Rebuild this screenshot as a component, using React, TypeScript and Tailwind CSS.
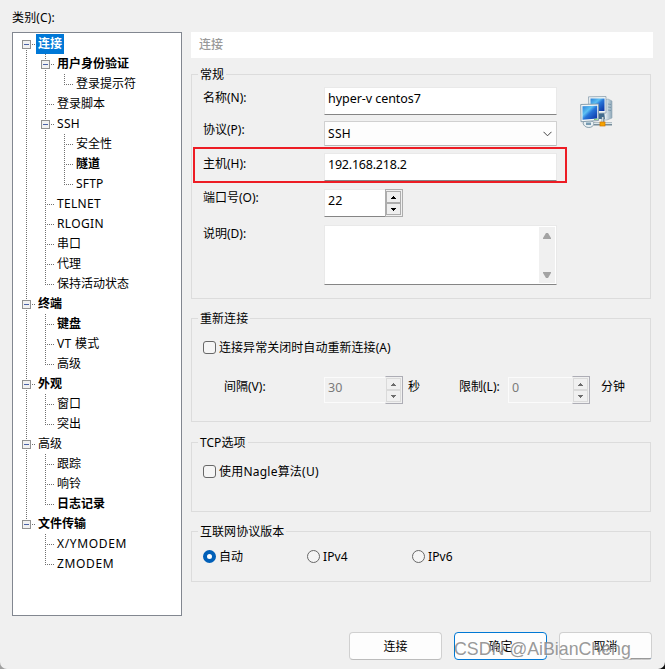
import type { ReactNode } from "react";

type Row = { text: string; cells: string; bold?: boolean; selected?: boolean; spacing?: string };

/* cells: F/B/E = expander (first, middle, end), T/L = branch (middle, last), I = pass-through line, - = blank */
const rows: Row[] = [
  { text: "连接", cells: "F", selected: true, bold: true },
  { text: "用户身份验证", cells: "IB", bold: true },
  { text: "登录提示符", cells: "IIL" },
  { text: "登录脚本", cells: "IT" },
  { text: "SSH", cells: "IB", spacing: "tracking-[0.3px]" },
  { text: "安全性", cells: "IIT" },
  { text: "隧道", cells: "IIT", bold: true },
  { text: "SFTP", cells: "IIL", spacing: "tracking-[0.2px]" },
  { text: "TELNET", cells: "IT", spacing: "tracking-[0.3px]" },
  { text: "RLOGIN", cells: "IT", spacing: "tracking-[0.35px]" },
  { text: "串口", cells: "IT" },
  { text: "代理", cells: "IT" },
  { text: "保持活动状态", cells: "IL" },
  { text: "终端", cells: "B", bold: true },
  { text: "键盘", cells: "IT", bold: true },
  { text: "VT 模式", cells: "IT", spacing: "tracking-[0.3px]" },
  { text: "高级", cells: "IL" },
  { text: "外观", cells: "B", bold: true },
  { text: "窗口", cells: "IT" },
  { text: "突出", cells: "IL" },
  { text: "高级", cells: "B" },
  { text: "跟踪", cells: "IT" },
  { text: "响铃", cells: "IT" },
  { text: "日志记录", cells: "IL", bold: true },
  { text: "文件传输", cells: "E", bold: true },
  { text: "X/YMODEM", cells: "-T", spacing: "tracking-[0.65px]" },
  { text: "ZMODEM", cells: "-L", spacing: "tracking-[0.65px]" },
];

function Cell({ kind }: { kind: string }) {
  const box = "FBE".includes(kind);
  const top = "IBETL".includes(kind);
  const bottom = "IFBT".includes(kind);
  const side = "FBETL".includes(kind);
  return (
    <svg width="19" height="20" className="shrink-0" fill="none" shapeRendering="crispEdges">
      {top && <path d="M9.5 0V11" stroke="#707070" strokeDasharray="1 1" />}
      {bottom && <path d="M9.5 10V20" stroke="#707070" strokeDasharray="1 1" />}
      {side && <path d="M9 10.5H18" stroke="#707070" strokeDasharray="1 1" />}
      {box && (
        <>
          <rect x="5.5" y="6.5" width="8" height="8" fill="#f1f1f1" stroke="#919191" />
          <path d="M7 10.5H12" stroke="#4b63a7" />
        </>
      )}
    </svg>
  );
}

function Group({ title, className, children }: { title: string; className: string; children: ReactNode }) {
  return (
    <section className={`relative w-[460px] border border-[#dcdcdc] ${className}`}>
      <h2 className="absolute -top-[9px] left-[6px] bg-[#f0f0f0] px-[2px] leading-[18px] tracking-[0.05px]">{title}</h2>
      {children}
    </section>
  );
}

function Field({ label, className, pad, children }: { label: string; className: string; pad?: boolean; children: ReactNode }) {
  return (
    <div className={`relative flex items-start ${className}`}>
      <span className={`w-[121px] shrink-0 leading-[18px] ${pad ? "pt-[2px]" : ""}`}>{label}</span>
      {children}
    </div>
  );
}

const inputBox = "h-[28px] w-[233px] border border-[#e9e9e9] border-b-[#858585] bg-white pl-[3px] text-[12.5px] leading-[22px]";

function Spin({ value, width, disabled }: { value: string; width: string; disabled?: boolean }) {
  const button = disabled ? "border-[#dadada] bg-[#f0f0f0]" : "border-[#adadad] bg-[#efefef]";
  const color = disabled ? "#6d6d6d" : "#000";
  return (
    <div className="flex h-[28px]">
      <div
        className={`pl-[3px] text-[12.5px] ${width} ${
          disabled
            ? "my-px h-[26px] border border-r-0 border-[#fbfbfb] leading-[20px] text-[#7a7a7a]"
            : "border border-r-0 border-[#e9e9e9] border-b-[#858585] bg-white leading-[22px]"
        }`}
      >
        {value}
      </div>
      <div
        className={`flex w-[18px] flex-col border py-px pr-px ${
          disabled ? "border-[#adadb5] border-l-[#f0f0f0]" : "border-[#adadad]"
        }`}
      >
        <div className={`flex h-[12px] items-center justify-center border ${button}`}>
          <svg width="5" height="3" shapeRendering="crispEdges"><path d="M2 0h1v1h1v1h1v1H0V2h1V1h1z" fill={color} /></svg>
        </div>
        <div className={`flex h-[12px] items-center justify-center border ${button}`}>
          <svg width="5" height="3" shapeRendering="crispEdges"><path d="M0 0h5v1H4v1H3v1H2V2H1V1H0z" fill={color} /></svg>
        </div>
      </div>
    </div>
  );
}

function Check({ label, className }: { label: string; className: string }) {
  return (
    <div className={`flex h-[18px] items-center gap-[3px] ${className}`}>
      <span className="-mt-px size-[13px] rounded-[3px] border border-[#686868] bg-[#f5f5f5]" />
      <span className="leading-[18px]">{label}</span>
    </div>
  );
}

function Radio({ label, on, className }: { label: string; on?: boolean; className: string }) {
  return (
    <div className={`flex items-center gap-[3px] ${className}`}>
      <span
        className={`-mt-px size-[13px] rounded-full ${on ? "border-4 border-[#005fb8] bg-white" : "border border-[#686868] bg-[#f5f5f5]"}`}
      />
      <span className="leading-[18px] tracking-[0.1px]">{label}</span>
    </div>
  );
}

function NetworkIcon() {
  return (
    <svg width="33" height="33" viewBox="0 0 33 33">
      <defs>
        <linearGradient id="screen" x1="0" y1="0" x2="1" y2="1">
          <stop offset="0" stopColor="#2b7fd8" />
          <stop offset=".35" stopColor="#5cc0f2" />
          <stop offset=".52" stopColor="#2674d9" />
          <stop offset="1" stopColor="#0a30a0" />
        </linearGradient>
        <linearGradient id="metal" x1="0" y1="0" x2="1" y2="0">
          <stop offset="0" stopColor="#f6fafc" />
          <stop offset="1" stopColor="#8ba6b8" />
        </linearGradient>
      </defs>
      <path d="M25 4l3-1 4 2v17l-5 2h-3z" fill="url(#metal)" stroke="#91a6b4" strokeWidth=".6" />
      <path d="M28 8l3 .5M28 11l3 .5M28 14l3 .5" stroke="#6f8fa5" strokeWidth=".8" />
      <path d="M18 17h6l1 6h-6z" fill="#426c8e" />
      <path d="M8.500 .8L26 .5v16.500L9 17.500z" fill="#edf3f5" stroke="#8ba0ae" strokeWidth=".8" />
      <path d="M10.500 2.500H24.500V15H10.500z" fill="url(#screen)" />
      <path d="M3 27c0-3 11-3 11 0 0 6-10 6-11 0z" fill="#e8eff2" stroke="#8ba0ad" />
      <path d="M6 26.500h5v2.500H6z" fill="#779bb2" />
      <path d="M.7 8.500L18.500 8v16.500L1 25.700z" fill="#f2f6f7" stroke="#8097a7" strokeWidth=".9" />
      <path d="M2.500 10.300L17.200 9.800v12.700L2.500 23.700z" fill="url(#screen)" />
      <path d="M14 23.500l4-.5" stroke="#72c96d" />
      <path d="M14 28H32M23 21v6" stroke="#768c99" strokeWidth="2.800" />
      <path d="M14 27.500H32M22.700 21v6" stroke="#dce6ea" strokeWidth="1" />
      <rect x="20" y="26" width="5" height="4" fill="#f4a300" stroke="#d47600" strokeWidth=".7" />
    </svg>
  );
}

function Button({ label, primary }: { label: string; primary?: boolean }) {
  return (
    <button
      className={`flex h-[28px] w-[93px] items-center justify-center rounded-[4px] border bg-[#fdfdfd] pt-px ${
        primary ? "border-[#0078d4]" : "border-[#d0d0d0] border-b-[#bcbcbc]"
      }`}
    >
      {label}
    </button>
  );
}

export default function App() {
  return (
    <div className="h-[669px] w-[665px] bg-[linear-gradient(90deg,#a0a0a0_50%,#101010_50%)]">
      <div className="relative h-[669px] w-[665px] overflow-hidden rounded-b-[7px] bg-[#f0f0f0] pt-[9px] pl-[12px] font-['Noto_Sans','Noto_Sans_CJK_SC',sans-serif] text-[12px] whitespace-nowrap text-black">
        <div className="h-[23px] leading-[18px] tracking-[0.15px]">类别(C):</div>

        <main className="flex gap-[9px]">
          <nav className="h-[584px] w-[170px] border border-[#828790] bg-white pt-px pl-[4px]">
            {rows.map((row, i) => (
              <div key={i} className="flex h-[20px]">
                {row.cells.split("").map((kind, j) => (
                  <Cell key={j} kind={kind} />
                ))}
                <span
                  className={`px-[2px] leading-[19px] ${row.spacing ?? ""} ${row.bold ? "font-bold" : ""} ${row.selected ? "bg-[#0078d7] text-white" : ""}`}
                >
                  {row.text}
                </span>
              </div>
            ))}
          </nav>

          <div>
            <div className="h-[26px] w-[462px] bg-white pl-[8px] leading-[25px] font-medium text-[#999]">连接</div>

            <Group title="常规" className="mt-[16px] flex h-[225px] pl-[11px]">
              <div>
                <Field label="名称(N):" className="mt-[12px] h-[28px]" pad>
                  <div className={`${inputBox} tracking-[-0.05px]`}>hyper-v centos7</div>
                </Field>
                <Field label="协议(P):" className="mt-[6px] h-[25px]">
                  <div className="flex h-[25px] w-[233px] items-center justify-between rounded-[1px] border border-[#d0d0d0] border-b-[#b8b8b8] bg-[#fdfdfd] pr-[4px] pl-[3px]">
                    <span className="tracking-[0.3px]">SSH</span>
                    <svg width="9" height="6" fill="none"><path d="M.5 .8L4.500 4.800L8.500 .8" stroke="#444" /></svg>
                  </div>
                </Field>
                <Field label="主机(H):" className="mt-[7px] h-[28px]" pad>
                  <div className={`${inputBox} tracking-[-0.22px]`}>192.168.218.2</div>
                  <div className="absolute -top-[6px] -left-[10px] h-[36px] w-[374px] border-2 border-[#ed1c24]" />
                </Field>
                <Field label="端口号(O):" className="mt-[8px] h-[28px]">
                  <Spin value="22" width="w-[61px]" />
                </Field>
                <Field label="说明(D):" className="mt-[8px] h-[60px]">
                  <div className="flex h-[60px] w-[233px] justify-end border border-[#e9e9e9] border-b-[#858585] bg-white py-px pr-px">
                    <div className="flex w-[16px] flex-col items-center justify-between bg-[#f0f0f0] pt-[6px] pb-[5px]">
                      <svg width="8" height="6"><path d="M0 6V5L3 0H5L8 5V6z" fill="#a3a3a3" /></svg>
                      <svg width="8" height="6"><path d="M0 0H8V1L5 6H3L0 1z" fill="#a3a3a3" /></svg>
                    </div>
                  </div>
                </Field>
              </div>
              <div className="mt-[21px] ml-[23px]"><NetworkIcon /></div>
            </Group>

            <Group title="重新连接" className="mt-[19px] h-[104px] pt-[20px]">
              <Check label="连接异常关闭时自动重新连接(A)" className="pl-[11px] tracking-[0.05px]" />
              <div className="mt-[19px] flex">
                <span className="w-[132px] pt-px pl-[32px] leading-[20px]">间隔(V):</span>
                <Spin value="30" width="w-[61px]" disabled />
                <span className="w-[51px] pt-px pl-[5px] leading-[20px]">秒</span>
                <span className="w-[54px] pt-px pl-[5px] leading-[20px]">限制(L):</span>
                <Spin value="0" width="w-[64px]" disabled />
                <span className="pt-px pl-[11px] leading-[20px]">分钟</span>
              </div>
            </Group>

            <Group title="TCP选项" className="mt-[20px] h-[70px] pt-[20px]">
              <Check label="使用Nagle算法(U)" className="pl-[11px] tracking-[0.22px]" />
            </Group>

            <Group title="互联网协议版本" className="mt-[19px] flex h-[51px] items-start pt-[16px] pl-[11px]">
              <Radio label="自动" on className="w-[104px]" />
              <Radio label="IPv4" className="w-[105px]" />
              <Radio label="IPv6" className="" />
            </Group>
          </div>
        </main>

        <footer className="mt-[16px] ml-[337px] flex gap-[12px]">
          <Button label="连接" />
          <Button label="确定" primary />
          <Button label="取消" />
        </footer>
        <div className="absolute top-[638px] left-[454px] font-['Liberation_Sans',sans-serif] text-[17.75px] leading-[22px] text-[#8c8c8c]/90 [text-shadow:1px_1px_0_#ffffff80]">
          CSDN @AiBianCheng__
        </div>
      </div>
    </div>
  );
}
